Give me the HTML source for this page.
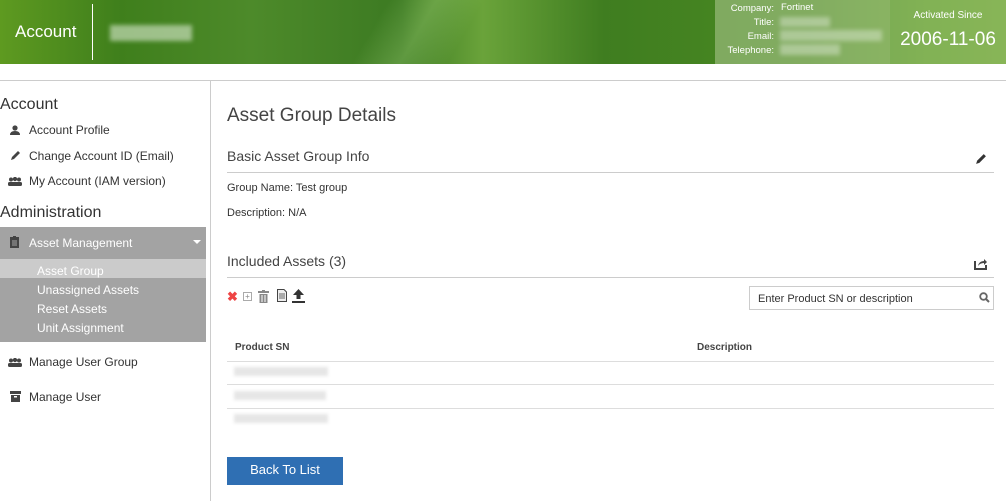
<!DOCTYPE html>
<html><head><meta charset="utf-8"><style>
*{margin:0;padding:0;box-sizing:border-box}
body{width:1006px;height:501px;overflow:hidden;background:#fff;font-family:"Liberation Sans",sans-serif;color:#333;position:relative}
.a{position:absolute}
.hdr{left:0;top:0;width:1006px;height:64px;background:linear-gradient(90deg,#5e9a20 0%,#3f7f1c 12%,#4d8a2a 25%,#3c7a22 40%,#6aa33a 48%,#3f7d20 60%,#4a8a22 80%,#6aa82a 92%,#78b030 100%)}
.blur{background:rgba(255,255,255,.35);filter:blur(2px)}
.side{font-size:12px;color:#333}
.ic{display:inline-block;vertical-align:-1px}
</style></head><body>
<div class="a hdr"></div>
<div class="a" style="left:150px;top:0;width:560px;height:64px;background:linear-gradient(120deg,rgba(0,0,0,0) 40%,rgba(160,210,120,.35) 48%,rgba(0,0,0,0) 56%)"></div>
<div class="a" style="left:15px;top:22px;color:#fff;font-size:17px">Account</div>
<div class="a" style="left:92px;top:4px;width:1px;height:56px;background:#fff"></div>
<div class="a blur" style="left:110px;top:25px;width:82px;height:16px;background:rgba(220,235,210,.6)"></div>
<div class="a" style="left:715px;top:0;width:175px;height:64px;background:rgba(160,190,130,.65)"></div>
<div class="a" style="left:890px;top:0;width:116px;height:64px;background:rgba(150,185,120,.55)"></div>
<div class="a" style="left:700px;top:2px;width:74px;text-align:right;color:#fff;font-size:9.5px;line-height:14px">Company:<br>Title:<br>Email:<br>Telephone:</div>
<div class="a" style="left:781px;top:2px;color:#fff;font-size:9.5px">Fortinet</div>
<div class="a blur" style="left:780px;top:17px;width:50px;height:10px"></div>
<div class="a blur" style="left:780px;top:30px;width:102px;height:11px"></div>
<div class="a blur" style="left:780px;top:44px;width:60px;height:11px"></div>
<div class="a" style="left:890px;top:10px;width:116px;text-align:center;color:#fff;font-size:10px">Activated Since</div>
<div class="a" style="left:890px;top:29px;width:116px;text-align:center;color:#fff;font-size:19px">2006-11-06</div>
<div class="a" style="left:0;top:80px;width:1006px;height:1px;background:#ccc"></div>
<div class="a" style="left:210px;top:81px;width:1px;height:420px;background:#ccc"></div>

<div class="a" style="left:0;top:96px;font-size:16px;color:#333">Account</div>
<div class="a side" style="left:10px;top:123px"><svg class="ic" width="10" height="10" viewBox="0 0 10 10"><circle cx="5" cy="3" r="2.6" fill="#444"/><path d="M0 10 Q0 6 5 6 Q10 6 10 10Z" fill="#444"/></svg><span style="margin-left:9px">Account Profile</span></div>
<div class="a side" style="left:10px;top:149px"><svg class="ic" width="11" height="11" viewBox="0 0 11 11"><path d="M1 10 L2 7 L8 1 L10 3 L4 9Z" fill="#444"/></svg><span style="margin-left:8px">Change Account ID (Email)</span></div>
<div class="a side" style="left:8px;top:174px"><svg class="ic" width="14" height="9" viewBox="0 0 14 9"><circle cx="3" cy="2.5" r="2" fill="#444"/><circle cx="7" cy="2" r="2.2" fill="#444"/><circle cx="11" cy="2.5" r="2" fill="#444"/><rect x="0" y="5" width="14" height="4" rx="1.5" fill="#444"/></svg><span style="margin-left:7px">My Account (IAM version)</span></div>
<div class="a" style="left:0;top:204px;font-size:16px;color:#333">Administration</div>
<div class="a" style="left:0;top:227px;width:206px;height:115px;background:#a3a3a3"></div>
<div class="a" style="left:0;top:259px;width:206px;height:19px;background:#cbcbcb"></div>
<div class="a side" style="left:10px;top:236px;color:#fff"><svg class="ic" width="9" height="12" viewBox="0 0 9 12"><rect x="0" y="1" width="9" height="11" fill="#444"/><rect x="3" y="0" width="3" height="2" fill="#444"/><path d="M2 5h5M2 7h5M2 9h5" stroke="#a3a3a3"/></svg><span style="margin-left:10px">Asset Management</span></div>
<div class="a" style="left:193px;top:240px;border-left:4px solid transparent;border-right:4px solid transparent;border-top:4px solid #fff"></div>
<div class="a side" style="left:37px;top:262px;color:#fff;line-height:19px">Asset Group<br>Unassigned Assets<br>Reset Assets<br>Unit Assignment</div>
<div class="a side" style="left:8px;top:355px"><svg class="ic" width="14" height="9" viewBox="0 0 14 9"><circle cx="3" cy="2.5" r="2" fill="#444"/><circle cx="7" cy="2" r="2.2" fill="#444"/><circle cx="11" cy="2.5" r="2" fill="#444"/><rect x="0" y="5" width="14" height="4" rx="1.5" fill="#444"/></svg><span style="margin-left:7px">Manage User Group</span></div>
<div class="a side" style="left:10px;top:390px"><svg class="ic" width="11" height="11" viewBox="0 0 11 11"><rect x="0" y="0" width="11" height="3" fill="#444"/><rect x="1" y="4" width="9" height="7" fill="#444"/><rect x="4" y="5" width="3" height="1.5" fill="#fff"/></svg><span style="margin-left:8px">Manage User</span></div>

<div class="a" style="left:227px;top:105px;font-size:19px;color:#444">Asset Group Details</div>
<div class="a" style="left:227px;top:148px;font-size:14px;color:#444">Basic Asset Group Info</div>
<svg class="a" style="left:975px;top:153px" width="12" height="12" viewBox="0 0 11 11"><path d="M1 10 L2 7 L8 1 L10 3 L4 9Z" fill="#333"/></svg>
<div class="a" style="left:227px;top:172px;width:767px;height:1px;background:#ccc"></div>
<div class="a" style="left:227px;top:182px;font-size:11px">Group Name: Test group</div>
<div class="a" style="left:227px;top:207px;font-size:11px">Description: N/A</div>
<div class="a" style="left:227px;top:253px;font-size:14px;color:#444">Included Assets (3)</div>
<svg class="a" style="left:974px;top:257px" width="14" height="13" viewBox="0 0 14 13"><path d="M1 4V12H12V8" stroke="#444" stroke-width="2" fill="none"/><path d="M4 9 Q5 4 10 4V2L13 5L10 8V6Q6 6 4 9Z" fill="#444"/></svg>
<div class="a" style="left:227px;top:277px;width:767px;height:1px;background:#ccc"></div>
<div class="a" style="left:227px;top:289px;font-size:13px;color:#e44;font-weight:bold">✖</div>
<div class="a" style="left:243px;top:292px;width:9px;height:9px;border:1px solid #aaa;font-size:8px;line-height:7px;text-align:center;color:#888">+</div>
<svg class="a" style="left:258px;top:290px" width="11" height="13" viewBox="0 0 11 13"><rect x="0" y="1" width="11" height="2" fill="#888"/><rect x="4" y="0" width="3" height="1" fill="#888"/><rect x="1.5" y="4" width="8" height="9" fill="#888"/><path d="M4 5v7M7 5v7" stroke="#fff"/></svg>
<svg class="a" style="left:277px;top:289px" width="10" height="13" viewBox="0 0 10 13"><path d="M0.5 0.5H7L9.5 3V12.5H0.5Z" fill="#eee" stroke="#444"/><path d="M2 5h6M2 7h6M2 9h6" stroke="#666"/></svg>
<svg class="a" style="left:292px;top:289px" width="13" height="14" viewBox="0 0 13 14"><path d="M6.5 0L12 6H8.5V10H4.5V6H1Z" fill="#333"/><rect x="0" y="12" width="13" height="2" fill="#333"/></svg>
<div class="a" style="left:749px;top:286px;width:245px;height:24px;border:1px solid #ccc;font-size:11px;padding:6px 8px;color:#333">Enter Product SN or description</div>
<svg class="a" style="left:979px;top:292px" width="11" height="11" viewBox="0 0 11 11"><circle cx="4.5" cy="4.5" r="3.3" stroke="#666" stroke-width="1.8" fill="none"/><path d="M7 7L10 10" stroke="#666" stroke-width="2"/></svg>
<div class="a" style="left:235px;top:342px;font-size:10px;font-weight:bold;color:#444">Product SN</div>
<div class="a" style="left:697px;top:342px;font-size:10px;font-weight:bold;color:#444">Description</div>
<div class="a" style="left:227px;top:361px;width:767px;height:1px;background:#ddd"></div>
<div class="a" style="left:227px;top:384px;width:767px;height:1px;background:#ddd"></div>
<div class="a" style="left:227px;top:408px;width:767px;height:1px;background:#ddd"></div>
<div class="a" style="left:234px;top:367px;width:94px;height:9px;background:#e6e6e6;filter:blur(1.5px)"></div>
<div class="a" style="left:234px;top:391px;width:92px;height:9px;background:#e6e6e6;filter:blur(1.5px)"></div>
<div class="a" style="left:234px;top:414px;width:94px;height:9px;background:#e6e6e6;filter:blur(1.5px)"></div>
<div class="a" style="left:227px;top:457px;width:116px;height:28px;background:#2f6fb3;color:#fff;font-size:13px;text-align:center;line-height:25px">Back To List</div>
</body></html>
